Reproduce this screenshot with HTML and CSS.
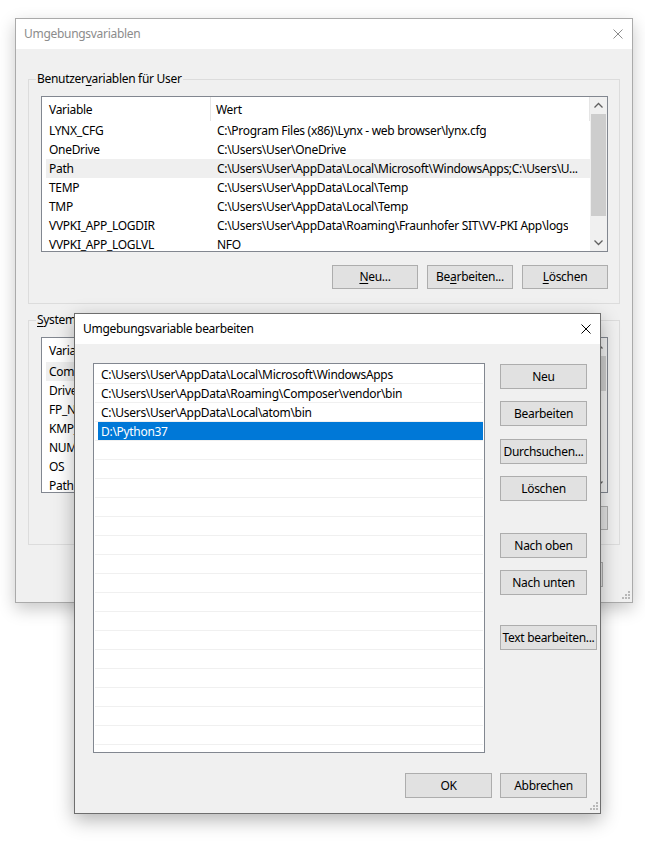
FILE: index.html
```html
<!DOCTYPE html>
<html lang="de">
<head>
	<meta charset="UTF-8">
	<title>Umgebungsvariablen</title>
	<link rel="stylesheet" href="styles.css">
</head>
<body>
<div class="desk">

	<!-- hinteres Fenster, inaktiv -->
	<div class="win win-back">
		<div class="titlebar">
			<span class="title">Umgebungsvariablen</span>
			<svg class="close" width="10" height="10" viewBox="0 0 10 10"><path d="M0.5 0.5L9.5 9.5M9.5 0.5L0.5 9.5"/></svg>
		</div>
		<div class="body">
			<fieldset class="group">
				<legend>Benutzer<u>v</u>ariablen für User</legend>
				<div class="listview">
					<div class="lv-main">
						<div class="lv-head"><span class="c1">Variable</span><span class="c2">Wert</span></div>
						<div class="lv-row"><span class="c1">LYNX_CFG</span><span class="c2">C:\Program Files (x86)\Lynx - web browser\lynx.cfg</span></div>
						<div class="lv-row"><span class="c1">OneDrive</span><span class="c2">C:\Users\User\OneDrive</span></div>
						<div class="lv-row hl"><span class="c1">Path</span><span class="c2">C:\Users\User\AppData\Local\Microsoft\WindowsApps;C:\Users\U...</span></div>
						<div class="lv-row"><span class="c1">TEMP</span><span class="c2">C:\Users\User\AppData\Local\Temp</span></div>
						<div class="lv-row"><span class="c1">TMP</span><span class="c2">C:\Users\User\AppData\Local\Temp</span></div>
						<div class="lv-row"><span class="c1">VVPKI_APP_LOGDIR</span><span class="c2">C:\Users\User\AppData\Roaming\Fraunhofer SIT\VV-PKI App\logs</span></div>
						<div class="lv-row"><span class="c1">VVPKI_APP_LOGLVL</span><span class="c2">NFO</span></div>
					</div>
					<div class="vscroll">
						<svg class="arrow" width="17" height="17" viewBox="0 0 17 17"><path d="M4.5 10.5L8.5 6.5L12.5 10.5"/></svg>
						<div class="thumb t-user"></div>
						<div class="track"></div>
						<svg class="arrow" width="17" height="17" viewBox="0 0 17 17"><path d="M4.5 6.5L8.5 10.5L12.5 6.5"/></svg>
					</div>
				</div>
				<div class="btnrow">
					<button class="btn"><u>N</u>eu...</button>
					<button class="btn">Be<u>a</u>rbeiten...</button>
					<button class="btn"><u>L</u>öschen</button>
				</div>
			</fieldset>

			<fieldset class="group group-sys">
				<legend><u>S</u>ystemvariablen</legend>
				<div class="listview">
					<div class="lv-main">
						<div class="lv-head"><span class="c1">Variable</span><span class="c2"></span></div>
						<div class="lv-row hl"><span class="c1">ComSpec</span></div>
						<div class="lv-row"><span class="c1">DriverData</span></div>
						<div class="lv-row"><span class="c1">FP_NO_HOST_CHECK</span></div>
						<div class="lv-row"><span class="c1">KMP_DUPLICATE_LIB_OK</span></div>
						<div class="lv-row"><span class="c1">NUMBER_OF_PROCESSORS</span></div>
						<div class="lv-row"><span class="c1">OS</span></div>
						<div class="lv-row"><span class="c1">Path</span></div>
					</div>
					<div class="vscroll">
						<svg class="arrow" width="17" height="17" viewBox="0 0 17 17"><path d="M4.5 10.5L8.5 6.5L12.5 10.5"/></svg>
						<div class="thumb t-sys"></div>
						<div class="track"></div>
						<svg class="arrow" width="17" height="17" viewBox="0 0 17 17"><path d="M4.5 6.5L8.5 10.5L12.5 6.5"/></svg>
					</div>
				</div>
				<div class="btnrow">
					<button class="btn"></button>
					<button class="btn"></button>
					<button class="btn"></button>
				</div>
			</fieldset>

			<div class="foot foot-back">
				<button class="btn"></button>
				<button class="btn"></button>
			</div>
		</div>
		<svg class="grip" width="8" height="8" viewBox="0 0 8 8"><rect x="6" y="0" width="2" height="2"/><rect x="3" y="3" width="2" height="2"/><rect x="6" y="3" width="2" height="2"/><rect x="0" y="6" width="2" height="2"/><rect x="3" y="6" width="2" height="2"/><rect x="6" y="6" width="2" height="2"/></svg>
	</div>

	<!-- vorderes Fenster, aktiv -->
	<div class="win win-edit">
		<div class="titlebar">
			<span class="title">Umgebungsvariable bearbeiten</span>
			<svg class="close" width="10" height="10" viewBox="0 0 10 10"><path d="M0.5 0.5L9.5 9.5M9.5 0.5L0.5 9.5"/></svg>
		</div>
		<div class="body">
			<div class="edit-main">
				<div class="pathlist">
					<div class="p-row"><span class="p-cell">C:\Users\User\AppData\Local\Microsoft\WindowsApps</span></div>
					<div class="p-row"><span class="p-cell">C:\Users\User\AppData\Roaming\Composer\vendor\bin</span></div>
					<div class="p-row"><span class="p-cell">C:\Users\User\AppData\Local\atom\bin</span></div>
					<div class="p-row sel"><span class="p-cell">D:\Python37</span></div>
					<div class="p-row"><span class="p-cell"></span></div>
					<div class="p-row"><span class="p-cell"></span></div>
					<div class="p-row"><span class="p-cell"></span></div>
					<div class="p-row"><span class="p-cell"></span></div>
					<div class="p-row"><span class="p-cell"></span></div>
					<div class="p-row"><span class="p-cell"></span></div>
					<div class="p-row"><span class="p-cell"></span></div>
					<div class="p-row"><span class="p-cell"></span></div>
					<div class="p-row"><span class="p-cell"></span></div>
					<div class="p-row"><span class="p-cell"></span></div>
					<div class="p-row"><span class="p-cell"></span></div>
					<div class="p-row"><span class="p-cell"></span></div>
					<div class="p-row"><span class="p-cell"></span></div>
					<div class="p-row"><span class="p-cell"></span></div>
					<div class="p-row"><span class="p-cell"></span></div>
					<div class="p-row"><span class="p-cell"></span></div>
					<div class="p-row last"><span class="p-cell"></span></div>
				</div>
				<div class="side">
					<button class="btn btn-e">Neu</button>
					<button class="btn btn-e">Bearbeiten</button>
					<button class="btn btn-e mt13">Durchsuchen...</button>
					<button class="btn btn-e">Löschen</button>
					<button class="btn btn-e mt32">Nach oben</button>
					<button class="btn btn-e">Nach unten</button>
					<button class="btn btn-e btn-wide mt30">Text bearbeiten...</button>
				</div>
			</div>
			<div class="foot foot-edit">
				<button class="btn btn-e">OK</button>
				<button class="btn btn-e">Abbrechen</button>
			</div>
		</div>
		<svg class="grip" width="8" height="8" viewBox="0 0 8 8"><rect x="6" y="0" width="2" height="2"/><rect x="3" y="3" width="2" height="2"/><rect x="6" y="3" width="2" height="2"/><rect x="0" y="6" width="2" height="2"/><rect x="3" y="6" width="2" height="2"/><rect x="6" y="6" width="2" height="2"/></svg>
	</div>

</div>
</body>
</html>
```

FILE: styles.css
```css
* {box-sizing: border-box;}
html, body {margin: 0; padding: 0; background: #fff;}
body {font-family: "Noto Sans", "Open Sans", sans-serif; font-size: 12px; letter-spacing: -0.3px; color: #000;}
u {text-underline-offset: 2px;}

.desk {position: relative; width: 645px; height: 845px; overflow: hidden;}

/* fenster */
.win {position: absolute; display: flex; flex-direction: column; background: #f0f0f0;}
.win-back {left: 15px; top: 18px; width: 618px; height: 585px; border: 1px solid #aaa; box-shadow: 0 6px 16px rgba(0,0,0,.22);}
.win-edit {left: 74px; top: 313px; width: 527px; height: 501px; border: 1px solid #6e6e6e; box-shadow: 0 6px 18px rgba(0,0,0,.3);}
.titlebar {flex: none; height: 30px; background: #fff; display: flex; align-items: center; justify-content: space-between; padding: 0 9px 0 8px;}
.title {line-height: 16px; white-space: nowrap;}
.win-back .title {color: #8c8c8c;}
.close path {stroke: #000; stroke-width: 1; fill: none;}
.win-back .close path {stroke: #8c8c8c;}
.grip {position: absolute; right: 2px; bottom: 3px;}
.grip rect {fill: #b8b8b8;}

/* hinteres fenster */
.win-back .body {flex: 1; padding: 22px 12px 0 12px; display: flex; flex-direction: column;}
.group {margin: 0; min-width: 0; border: 1px solid #dcdcdc; padding: 9px 11px 14px 12px;}
.group legend {margin-left: -5px; padding: 0 1px; line-height: 16px; white-space: nowrap;}
.group-sys {margin-top: 8px;}
.listview {display: flex; height: 156px; border: 1px solid #828790; background: #fff;}
.lv-main {flex: 1; min-width: 0; overflow: hidden;}
.lv-head {display: flex; height: 24px; align-items: center; border-right: 1px solid #e5e5e5;}
.lv-head .c1 {width: 169px; height: 100%; display: flex; align-items: center; padding-left: 7px; border-right: 1px solid #e5e5e5;}
.lv-head .c2 {padding-left: 5px;}
.lv-row {display: flex; height: 19px; align-items: center; margin-left: 4px; white-space: nowrap;}
.lv-row.hl {background: #efefef;}
.lv-row .c1 {flex: none; width: 165px; padding-left: 3px; overflow: hidden;}
.lv-row .c2 {padding-left: 6px; overflow: hidden;}

.vscroll {flex: none; width: 17px; display: flex; flex-direction: column; background: #f0f0f0;}
.vscroll .arrow {flex: none;}
.arrow path {stroke: #606060; stroke-width: 1.3; fill: none;}
.thumb {flex: none; margin: 0 1px; background: #cdcdcd;}
.t-user {height: 102px;}
.t-sys {height: 35px; margin-top: 1px;}
.track {flex: 1;}

.btnrow {display: flex; justify-content: flex-end; gap: 9px; margin-top: 13px;}
.btn {font: inherit; letter-spacing: inherit; color: #000; width: 86px; height: 24px; padding: 0; background: #e1e1e1; border: 1px solid #adadad; line-height: 16px; white-space: nowrap;}
.foot {display: flex; justify-content: flex-end;}
.foot-back {gap: 9px; margin-top: 17px; margin-right: 17px; height: 25px;}
.foot-back .btn {height: 25px;}

/* vorderes fenster */
.win-edit .body {flex: 1; padding: 19px 3px 0 18px; display: flex; flex-direction: column;}
.edit-main {display: flex; align-items: flex-start;}
.pathlist {flex: none; width: 392px; height: 390px; padding-top: 1px; border: 1px solid #828790; background: #fff; overflow: hidden;}
.p-row {height: 19px; margin: 0 1px; border-bottom: 1px solid #f0f0f0; display: flex;}
.p-row.last {border-bottom: 0;}
.p-cell {flex: 1; margin-left: 3px; padding-left: 3px; display: flex; align-items: center; white-space: nowrap;}
.p-row.sel .p-cell {background: #0078d7; color: #fff;}

.side {flex: none; margin-left: 15px; padding-top: 1px; display: flex; flex-direction: column; align-items: flex-start;}
.btn-e {width: 87px; height: 25px; margin-top: 12px;}
.side .btn-e:first-child {margin-top: 0;}
.side .mt13 {margin-top: 13px;}
.side .mt32 {margin-top: 32px;}
.side .mt30 {margin-top: 30px;}
.btn-wide {width: 97px;}
.foot-edit {gap: 8px; margin-top: 20px; margin-right: 10px;}
.foot-edit .btn-e {margin-top: 0;}
```
